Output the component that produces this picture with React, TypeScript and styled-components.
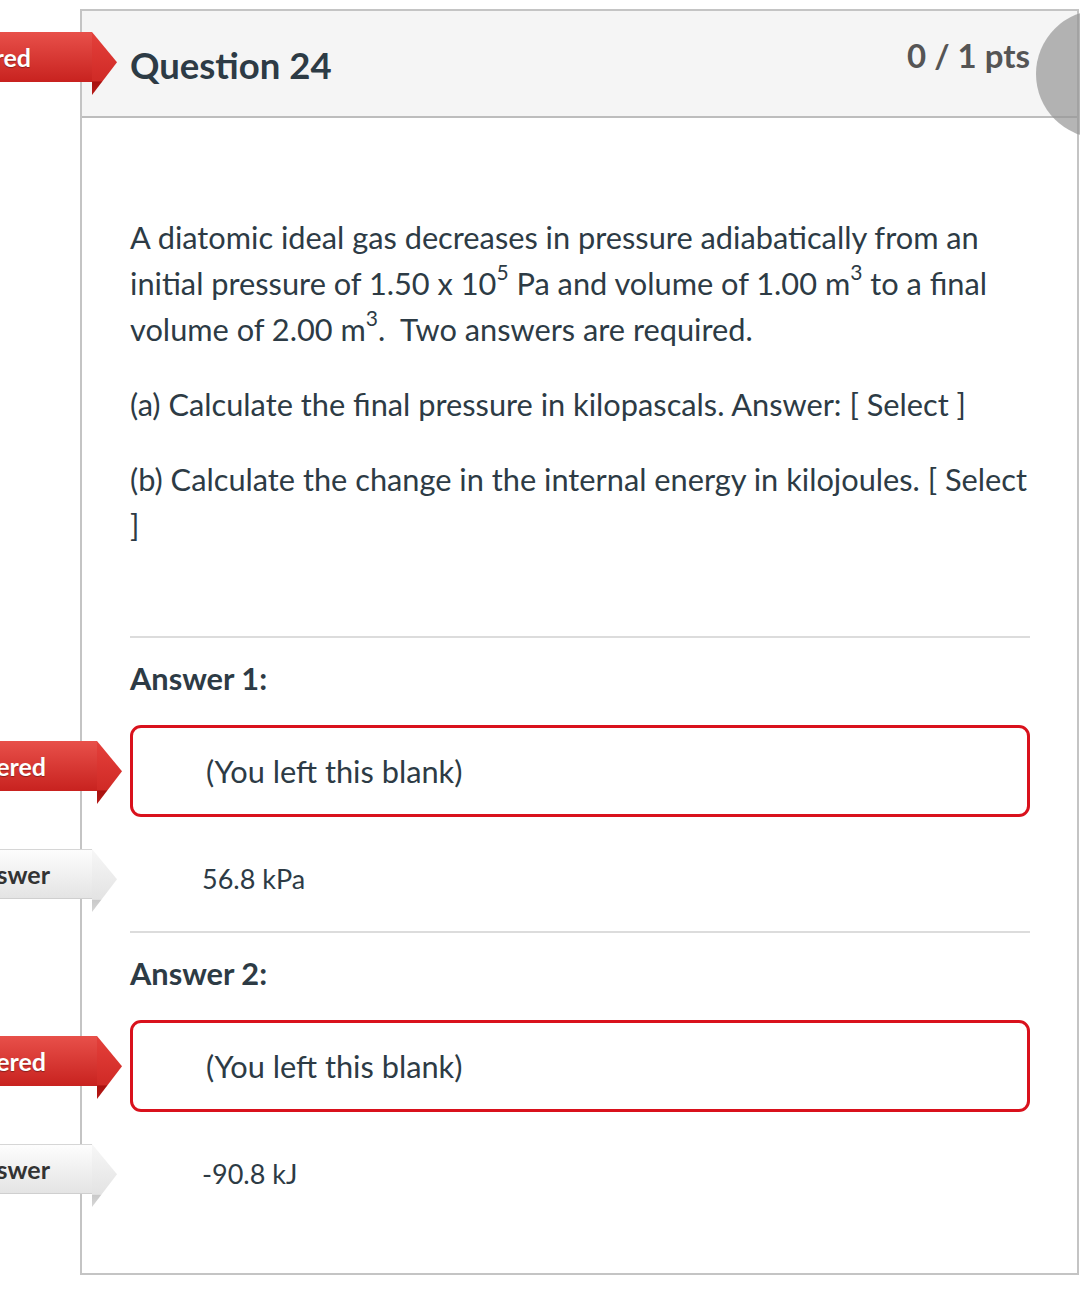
import React from 'react';
import styled, { createGlobalStyle } from 'styled-components';

const TEXT = '#2d3b45';
const BODY_SIZE = '30.75px';

const GlobalStyle = createGlobalStyle`
  html, body {
    margin: 0;
    padding: 0;
    background: #ffffff;
  }
  body {
    font-family: Lato, "Open Sans", "Liberation Sans", sans-serif;
    color: ${TEXT};
    overflow: hidden;
  }
`;

const Page = styled.div`
  width: 1080px;
  height: 1300px;
  padding: 9px 0 0 80px;
  box-sizing: border-box;
  overflow: hidden;
`;

const Card = styled.section`
  display: flex;
  flex-direction: column;
  width: 999px;
  height: 1266px;
  box-sizing: border-box;
  border: 2px solid #c4c4c4;
  background: #fff;
`;

const Header = styled.header`
  position: relative;
  display: flex;
  justify-content: space-between;
  align-items: flex-start;
  height: 107px;
  box-sizing: border-box;
  padding: 0 47px 0 48px;
  background: #f5f5f5;
  border-bottom: 2px solid #bdbdbd;
`;

const Title = styled.h2`
  margin: 0;
  padding-top: 34px;
  font-size: 36.5px;
  font-weight: 700;
  line-height: 40px;
  color: ${TEXT};
`;

const Points = styled.div`
  padding-top: 24px;
  font-size: 33px;
  font-weight: 700;
  line-height: 40px;
  color: #555;
`;

const Dot = styled.div`
  position: absolute;
  right: -87px;
  top: -1px;
  width: 128px;
  height: 128px;
  border-radius: 50%;
  background: rgba(150, 150, 150, 0.7);
`;

const Body = styled.div`
  display: flex;
  flex-direction: column;
  padding: 97px 47px 0 48px;
`;

const Question = styled.div`
  display: flex;
  flex-direction: column;
  gap: 29px;
  padding-bottom: 87px;
`;

const Para = styled.p`
  margin: 0;
  font-size: ${BODY_SIZE};
  line-height: 46px;
  color: ${TEXT};
`;

const Sup = styled.sup`
  font-size: 21px;
  line-height: 0;
  vertical-align: 15px;
`;

const Answers = styled.div`
  display: flex;
  flex-direction: column;
  border-top: 2px solid #dcdcdc;
`;

const Label = styled.h3`
  margin: 0;
  padding: 23px 0 28px;
  font-size: ${BODY_SIZE};
  font-weight: 700;
  line-height: 36px;
  color: ${TEXT};
`;

const Row = styled.div<{ $variant: 'wrong' | 'correct' }>`
  position: relative;
  display: flex;
  align-items: center;
  box-sizing: border-box;
  height: ${(p) => (p.$variant === 'wrong' ? '92px' : '114px')};
  padding-left: ${(p) => (p.$variant === 'wrong' ? '73px' : '72px')};
  padding-top: ${(p) => (p.$variant === 'wrong' ? '0' : '8px')};
  border: ${(p) => (p.$variant === 'wrong' ? '3px solid #d9111c' : '0')};
  border-radius: 11px;
  font-size: ${(p) => (p.$variant === 'wrong' ? BODY_SIZE : '27px')};
  color: ${TEXT};
`;

type Tone = 'red' | 'gray';

const Flag = styled.div<{ $tone: Tone; $right: number; $top: number; $pad: number }>`
  position: absolute;
  top: ${(p) => p.$top}px;
  right: calc(100% + ${(p) => p.$right}px);
  display: flex;
  align-items: center;
  justify-content: flex-end;
  width: 320px;
  height: 50px;
  padding-right: ${(p) => p.$pad}px;
  box-sizing: border-box;
  font-size: 25px;
  font-weight: 700;
  white-space: nowrap;
  color: ${(p) => (p.$tone === 'red' ? '#fff' : '#333')};
  text-shadow: ${(p) => (p.$tone === 'red' ? '0 1px 1px rgba(0,0,0,0.35)' : 'none')};
  background: ${(p) =>
    p.$tone === 'red'
      ? 'linear-gradient(#e8504a, #c8221f)'
      : 'linear-gradient(#fdfdfd, #e4e4e4)'};
  border-top: ${(p) => (p.$tone === 'red' ? '0' : '1px solid #d6d6d6')};
  border-bottom: ${(p) => (p.$tone === 'red' ? '0' : '1px solid #cfcfcf')};
  z-index: 2;

  &::after {
    content: '';
    position: absolute;
    left: 100%;
    top: ${(p) => (p.$tone === 'red' ? '0' : '-1px')};
    width: 25px;
    height: 63px;
    background: ${(p) =>
      p.$tone === 'red'
        ? 'linear-gradient(#e4403b 0%, #d02a26 78%, #a8110f 79%, #b71a17 100%)'
        : 'linear-gradient(#f7f7f7 0%, #e3e3e3 80%, #c9c9c9 81%, #d6d6d6 100%)'};
    clip-path: polygon(0 0, 100% 48%, 0 100%);
  }
`;

const HeaderFlag = styled(Flag)`
  right: auto;
  left: -310px;
`;

interface IAnswerProps {
  label: string;
  correct: string;
}

const AnswerBlock: React.FC<IAnswerProps> = ({ label, correct }) => (
  <Answers>
    <Label>{label}</Label>
    <Row $variant="wrong">
      <Flag $tone="red" $right={36} $top={13} $pad={51}>
        Unanswered
      </Flag>
      (You left this blank)
    </Row>
    <Row $variant="correct">
      <Flag $tone="gray" $right={38} $top={32} $pad={42}>
        Correct Answer
      </Flag>
      {correct}
    </Row>
  </Answers>
);

const App: React.FC = () => {
  return (
    <>
      <GlobalStyle />
      <Page>
        <Card>
          <Header>
            <HeaderFlag $tone="red" $right={0} $top={21} $pad={61}>
              Unanswered
            </HeaderFlag>
            <Title>Question 24</Title>
            <Points>0 / 1 pts</Points>
            <Dot />
          </Header>
          <Body>
            <Question>
              <Para>
                A diatomic ideal gas decreases in pressure adiabatically from an
                initial pressure of 1.50 x 10<Sup>5</Sup> Pa and volume of 1.00 m
                <Sup>3</Sup> to a final volume of 2.00 m<Sup>3</Sup>.&nbsp; Two
                answers are required.
              </Para>
              <Para>
                (a) Calculate the final pressure in kilopascals. Answer: [ Select ]
              </Para>
              <Para>
                (b) Calculate the change in the internal energy in kilojoules. [ Select
                <br />]
              </Para>
            </Question>
            <AnswerBlock label="Answer 1:" correct="56.8 kPa" />
            <AnswerBlock label="Answer 2:" correct="-90.8 kJ" />
          </Body>
        </Card>
      </Page>
    </>
  );
};

export default App;
